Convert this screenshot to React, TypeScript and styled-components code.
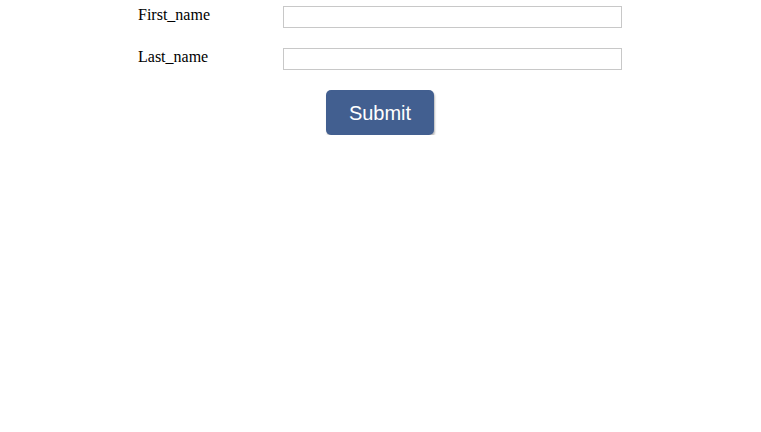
import styled, { createGlobalStyle } from "styled-components";

const GlobalStyle = createGlobalStyle`
  body {
    margin: 0;
    background: #ffffff;
    font-family: "Liberation Serif", "Times New Roman", serif;
  }
`;

const Form = styled.form`
  padding-top: 6px;
  display: flex;
  flex-direction: column;
`;

const Row = styled.div`
  display: flex;
  align-items: flex-start;
  padding-left: 138px;
  margin-bottom: 20px;
`;

const Label = styled.label`
  width: 145px;
  font-size: 16px;
  line-height: 18px;
  color: #000;
`;

const Input = styled.input`
  box-sizing: border-box;
  margin: 0;
  width: 339px;
  height: 22px;
  border: 1px solid #c8c8c8;
  outline: none;
  padding: 0 4px;
  font-family: inherit;
`;

const SubmitButton = styled.button`
  align-self: center;
  margin: 0 1px 0 0;
  width: 108px;
  height: 45px;
  padding: 2px 0 0 0;
  border: none;
  border-radius: 5px;
  background: #425f90;
  color: #ffffff;
  font-family: "Liberation Sans", Arial, sans-serif;
  font-size: 20px;
  box-shadow: 1px 2px 2px rgba(0, 0, 0, 0.28);
  cursor: pointer;
`;

export default function App() {
  return (
    <>
      <GlobalStyle />
      <Form onSubmit={e => e.preventDefault()}>
        <Row>
          <Label htmlFor="first_name">First_name</Label>
          <Input id="first_name" name="first_name" type="text" />
        </Row>
        <Row>
          <Label htmlFor="last_name">Last_name</Label>
          <Input id="last_name" name="last_name" type="text" />
        </Row>
        <SubmitButton type="submit">Submit</SubmitButton>
      </Form>
    </>
  );
}
